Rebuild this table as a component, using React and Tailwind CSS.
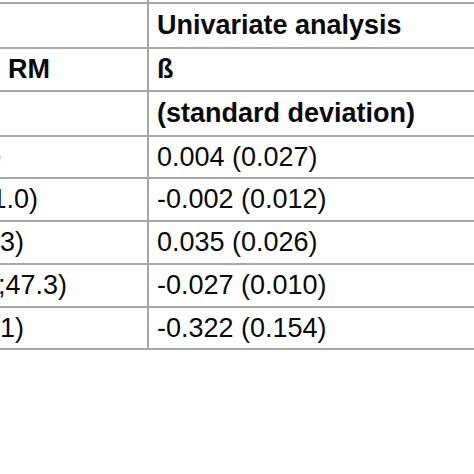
import React from "react";

const rows = [
  { h: "h-[45px]", left: "", leftPr: "pr-[97px]", right: "Univariate analysis", bold: true },
  { h: "h-[43px]", left: "Characteristic RM", leftPr: "pr-[97px]", right: "ß", bold: true },
  { h: "h-[45px]", left: "", leftPr: "pr-[97px]", right: "(standard deviation)", bold: true },
  { h: "h-[42px]", left: "Age", leftPr: "pr-[145px]", right: "0.004 (0.027)", bold: false, leftFaint: true },
  { h: "h-[43px]", left: "34.0 (27.0;41.0)", leftPr: "pr-[109px]", right: "-0.002 (0.012)", bold: false },
  { h: "h-[43px]", left: "1.5 (1.2;1.3)", leftPr: "pr-[123px]", right: "0.035 (0.026)", bold: false },
  { h: "h-[43px]", left: "40.2 (33.1;47.3)", leftPr: "pr-[80px]", right: "-0.027 (0.010)", bold: false },
  { h: "h-[44px] border-b-2", left: "1.0 (0.9;1.1)", leftPr: "pr-[123px]", right: "-0.322 (0.154)", bold: false },
];

export default function App() {
  return (
    <div className="w-[474px] h-[474px] bg-white overflow-hidden font-['Liberation_Sans',Arial,sans-serif] text-[27px] text-[#0a0a0a]">
      <div className="flex h-[2px]">
        <div className="w-[149px] border-r-2 border-[#a8a8a8]" />
        <div className="flex-1" />
      </div>
      {rows.map((r, i) => (
        <div key={i} className={`flex border-t-2 border-[#a8a8a8] ${r.h}`}>
          <div
            className={`w-[149px] shrink-0 border-r-2 border-[#a8a8a8] overflow-hidden flex items-center justify-end ${r.leftPr} ${r.bold ? "font-bold" : ""}`}
          >
            <span className={`shrink-0 whitespace-nowrap ${r.leftFaint ? "text-[#ccc]" : ""}`}>{r.left}</span>
          </div>
          <div className={`flex-1 flex items-center pl-[8px] whitespace-nowrap ${r.bold ? "font-bold" : ""}`}>
            {r.right}
          </div>
        </div>
      ))}
    </div>
  );
}
